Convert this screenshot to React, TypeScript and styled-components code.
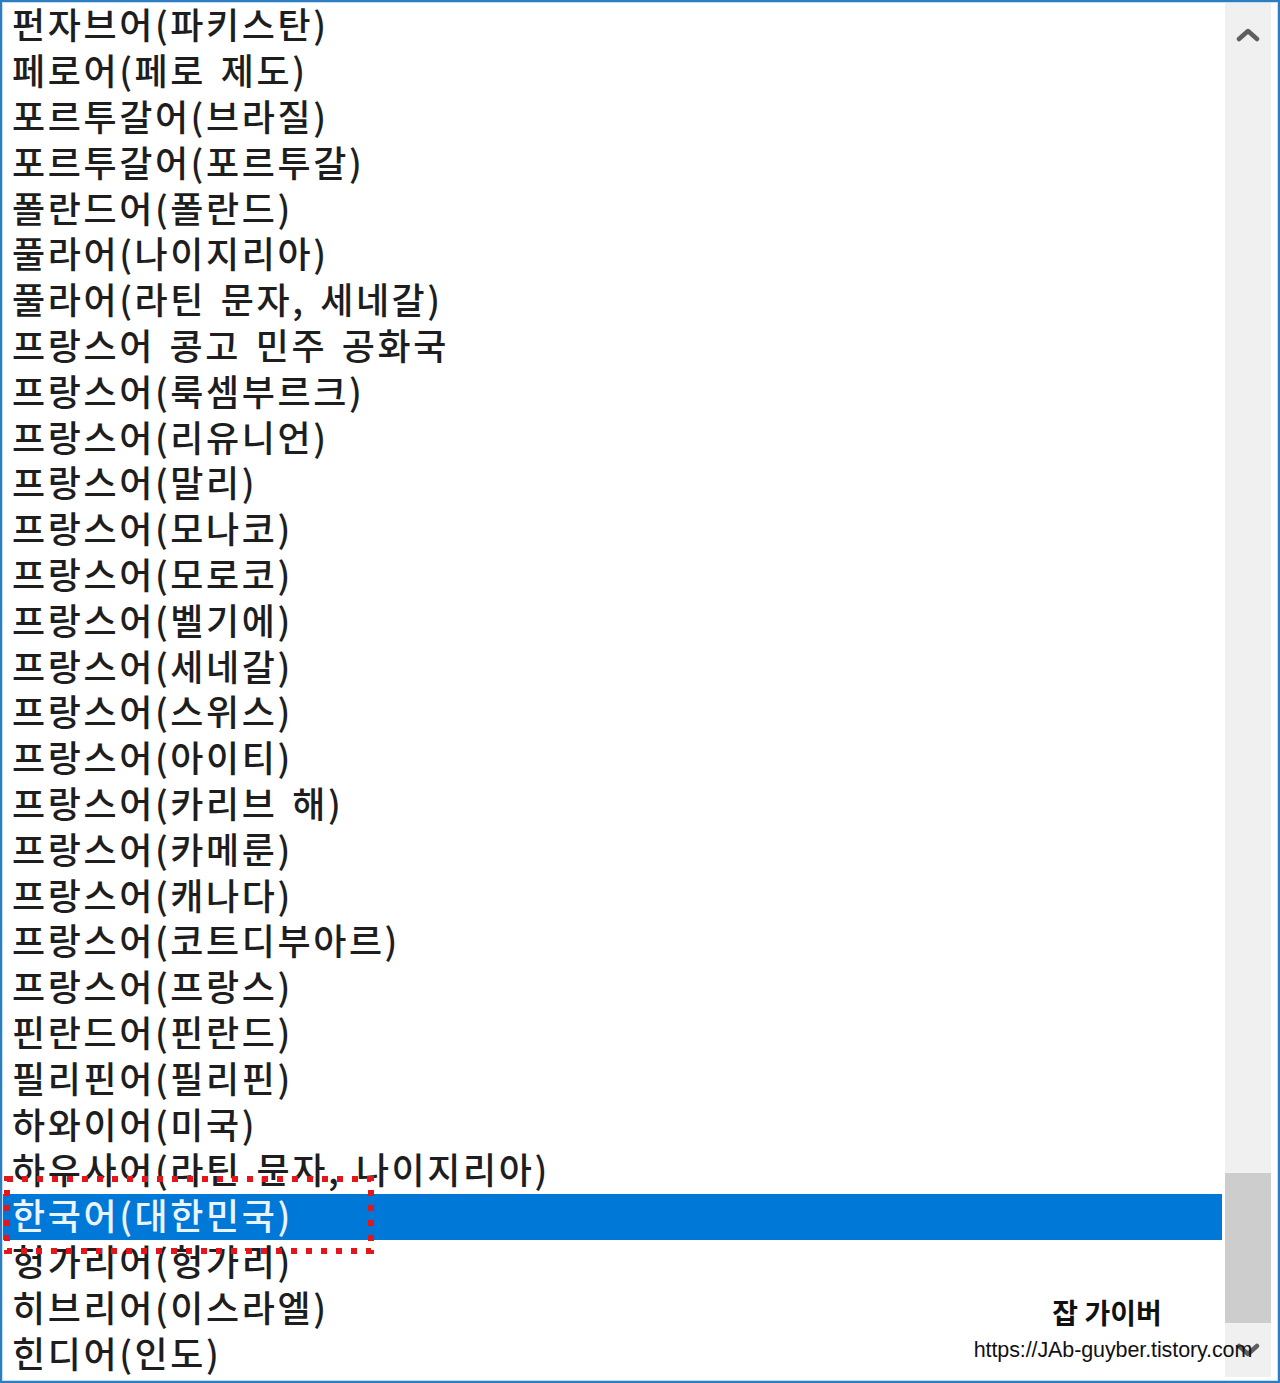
import React from "react";
import styled, { createGlobalStyle } from "styled-components";

const Global = createGlobalStyle`
  html, body { margin: 0; padding: 0; background: #ffffff; overflow: hidden; }
  * { box-sizing: border-box; }
`;

const Frame = styled.div`
  position: relative;
  width: 1280px;
  height: 1383px;
  border: 2px solid #2f7cc0;
  box-shadow: inset 0 0 0 1px #bfe1f7;
  background: #ffffff;
  display: grid;
  grid-template-columns: 1219px 46px;
  column-gap: 3px;
  padding: 1px 5px 4px 1px;
`;

const List = styled.ul`
  list-style: none;
  margin: 0;
  padding: 0;
  overflow: hidden;
`;

const Row = styled.li<{ $selected?: boolean }>`
  height: 45.8px;
  display: flex;
  align-items: center;
  padding-left: 9px;
  padding-bottom: 5px;
  font-family: "Noto Sans CJK KR", "Noto Sans", sans-serif;
  font-size: 36px;
  font-weight: 500;
  line-height: 1;
  letter-spacing: 2.6px;
  word-spacing: 4px;
  white-space: pre;
  color: ${(p) => (p.$selected ? "#eaf4ff" : "#1e1e1e")};
  background: ${(p) => (p.$selected ? "#0078d7" : "transparent")};
`;

const Scrollbar = styled.div`
  background: #f0f0f0;
  display: grid;
  grid-template-rows: 64px 1fr 54px;
`;

const ArrowButton = styled.div`
  display: flex;
  align-items: center;
  justify-content: center;
`;

const Track = styled.div`
  display: flex;
  flex-direction: column;
  justify-content: flex-end;
`;

const Thumb = styled.div`
  height: 150px;
  background: #cdcdcd;
`;

const Marker = styled.svg`
  position: absolute;
  left: 1px;
  top: 1173px;
  overflow: visible;
`;

const Watermark = styled.div`
  position: absolute;
  left: 960px;
  top: 1292px;
  width: 300px;
  display: flex;
  flex-direction: column;
  align-items: center;
  color: #111111;
`;

const WmTitle = styled.div`
  font-family: "Noto Sans CJK KR", "Noto Sans", sans-serif;
  font-weight: 700;
  font-size: 28px;
  line-height: 36px;
  margin-left: -10px;
`;

const WmUrl = styled.div`
  font-family: "Liberation Sans", "Noto Sans CJK KR", sans-serif;
  font-size: 21.5px;
  line-height: 28px;
  margin-top: 6px;
  margin-left: 2px;
  letter-spacing: -0.1px;
`;

const items = [
  "펀자브어(파키스탄)",
  "페로어(페로 제도)",
  "포르투갈어(브라질)",
  "포르투갈어(포르투갈)",
  "폴란드어(폴란드)",
  "풀라어(나이지리아)",
  "풀라어(라틴 문자, 세네갈)",
  "프랑스어 콩고 민주 공화국",
  "프랑스어(룩셈부르크)",
  "프랑스어(리유니언)",
  "프랑스어(말리)",
  "프랑스어(모나코)",
  "프랑스어(모로코)",
  "프랑스어(벨기에)",
  "프랑스어(세네갈)",
  "프랑스어(스위스)",
  "프랑스어(아이티)",
  "프랑스어(카리브 해)",
  "프랑스어(카메룬)",
  "프랑스어(캐나다)",
  "프랑스어(코트디부아르)",
  "프랑스어(프랑스)",
  "핀란드어(핀란드)",
  "필리핀어(필리핀)",
  "하와이어(미국)",
  "하우사어(라틴 문자, 나이지리아)",
  "한국어(대한민국)",
  "헝가리어(헝가리)",
  "히브리어(이스라엘)",
  "힌디어(인도)",
];

const Chevron = ({ up }: { up?: boolean }) => (
  <svg width="24" height="14" viewBox="0 0 24 14">
    <path
      d={up ? "M3 11 L12 3 L21 11" : "M3 3 L12 11 L21 3"}
      fill="none"
      stroke="#5f5f5f"
      strokeWidth="4.5"
      strokeLinecap="round"
      strokeLinejoin="round"
    />
  </svg>
);

export default function App() {
  return (
    <>
      <Global />
      <Frame>
        <List>
          {items.map((t, i) => (
            <Row key={i} $selected={i === 26}>
              {t}
            </Row>
          ))}
        </List>
        <Scrollbar>
          <ArrowButton>
            <Chevron up />
          </ArrowButton>
          <Track>
            <Thumb />
          </Track>
          <ArrowButton>
            <Chevron />
          </ArrowButton>
        </Scrollbar>
        <Marker width="372" height="80" viewBox="0 0 372 80">
          <rect
            x="4"
            y="4"
            width="364"
            height="72"
            fill="none"
            stroke="#e3161c"
            strokeWidth="6"
            strokeDasharray="6 9"
          />
        </Marker>
        <Watermark>
          <WmTitle>잡 가이버</WmTitle>
          <WmUrl>https://JAb-guyber.tistory.com</WmUrl>
        </Watermark>
      </Frame>
    </>
  );
}
